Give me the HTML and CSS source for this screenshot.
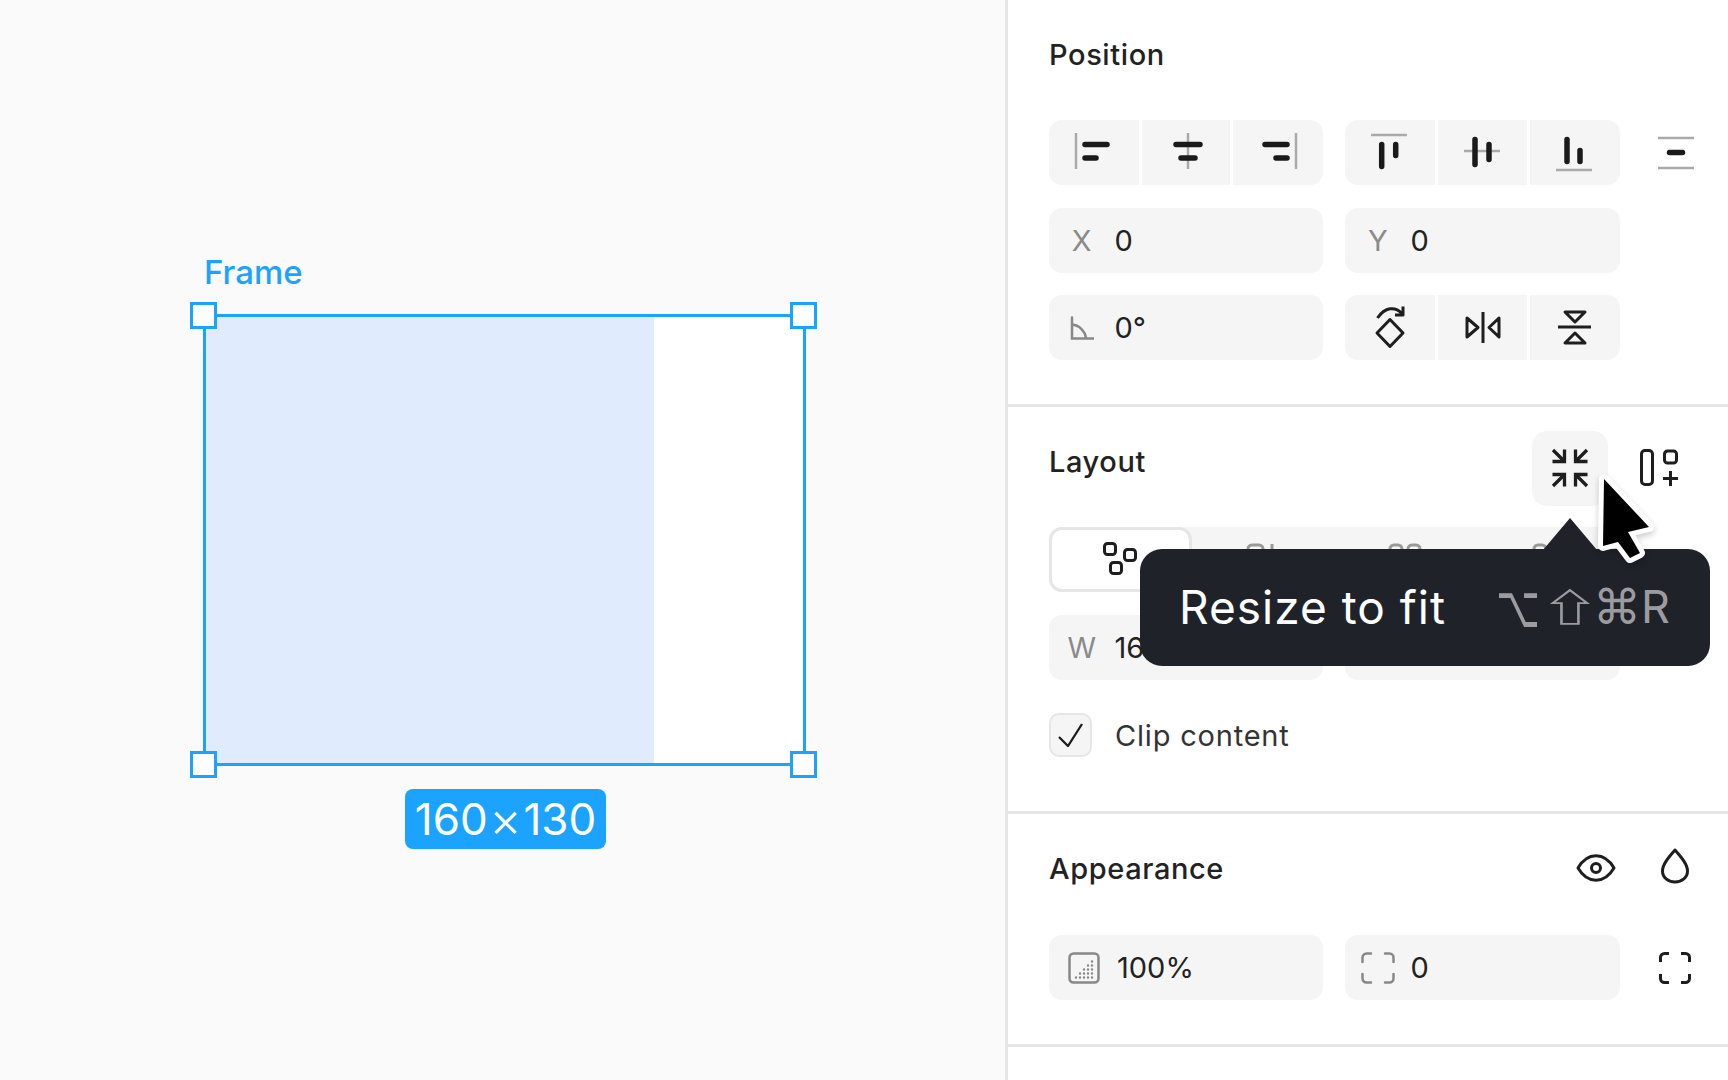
FILE: index.html
```html
<!DOCTYPE html>
<html lang="en">
<head>
<meta charset="utf-8">
<title>Resize to fit</title>
<link rel="stylesheet" href="styles.css">
</head>
<body>
<div class="app">
  <main class="canvas">
    <div class="frame-label">Frame</div>
    <div class="frame"><div class="frame-fill"></div></div>
    <span class="handle h-tl"></span><span class="handle h-tr"></span><span class="handle h-bl"></span><span class="handle h-br"></span>
    <div class="size-badge">160<span class="times">×</span>130</div>
  </main>
  <aside class="panel">
    <section class="section s-position">
      <h2 class="title t-position">Position</h2>
      <div class="grid">
        <div class="seg">
          <div class="cell"><svg class="ico" width="90" height="65" viewBox="0 0 90 65"><path class="g" d="M27 13v36"/><path class="b" d="M36 24.500h22M36 38h11"/></svg></div>
          <div class="cell"><svg class="ico" width="88" height="65" viewBox="0 0 88 65"><path class="g" d="M46 13v36"/><path class="b" d="M34 24.500h24M39 38h14"/></svg></div>
          <div class="cell"><svg class="ico" width="90" height="65" viewBox="0 0 90 65"><path class="g" d="M63 13v36"/><path class="b" d="M32 24.500h22M43 38h11"/></svg></div>
        </div>
        <div class="seg">
          <div class="cell"><svg class="ico" width="90" height="65" viewBox="0 0 90 65"><path class="g" d="M26 15h36"/><path class="b" d="M36.700 24.500v22M50.700 24.500v11"/></svg></div>
          <div class="cell"><svg class="ico" width="89" height="65" viewBox="0 0 89 65"><path class="g" d="M26 31h36"/><path class="b" d="M37 19.500v25M51 24.500v15"/></svg></div>
          <div class="cell"><svg class="ico" width="90" height="65" viewBox="0 0 90 65"><path class="g" d="M26 50h36"/><path class="b" d="M37 19.500v22M50 30.500v11"/></svg></div>
        </div>
        <div class="side"><svg class="ico" width="75" height="65" viewBox="0 0 75 65"><path class="g" d="M38 18h36M38 48h36"/><path class="b" d="M49.500 32.500h13"/></svg></div>

        <div class="field"><span class="lab">X</span><span class="val">0</span></div>
        <div class="field"><span class="lab">Y</span><span class="val">0</span></div>
        <div class="side"></div>

        <div class="field"><span class="lab lab-ico"><svg width="24" height="24" viewBox="0 0 24 24"><path class="gs" d="M2 1.500V22.500H24M2 8.500C9 9 15 15 16 22"/></svg></span><span class="val">0°</span></div>
        <div class="seg">
          <div class="cell"><svg class="ico" width="90" height="65" viewBox="0 0 90 65"><path class="k" d="M45 24.500L58 38 45 51.500 32 38z"/><path class="k" d="M32.500 23C40 12 50 11 57 18.500M58 11.500V20H50"/></svg></div>
          <div class="cell"><svg class="ico" width="89" height="65" viewBox="0 0 89 65"><path class="k" d="M45 17v31"/><path class="k" d="M29 23l11 9.500-11 9.500zM61 23L51 32.500 61 42z"/></svg></div>
          <div class="cell"><svg class="ico" width="90" height="65" viewBox="0 0 90 65"><path class="k" d="M28 32h33"/><path class="k" d="M35 17h20l-10 10zM35 48h20l-10-10z"/></svg></div>
        </div>
        <div class="side"></div>
      </div>
    </section>

    <section class="section s-layout">
      <div class="head">
        <h2 class="title title-up">Layout</h2>
        <div class="head-tools">
          <button class="tool tool-on"><svg width="48" height="48" viewBox="0 0 48 48"><path class="k k35" d="M7 6L18.500 17.500M6.500 17.500H18.500V5.500M41 6L29.500 17.500M41.500 17.500H29.500V5.500M7 42L18.500 30.500M6.500 30.500H18.500V42.500M41 42L29.500 30.500M41.500 30.500H29.500V42.500"/></svg></button>
          <button class="tool tool-plain"><svg width="44" height="44" viewBox="0 0 44 44"><rect class="k" x="4.500" y="4.500" width="11" height="34" rx="3.500"/><rect class="k" x="27.500" y="5" width="12" height="12" rx="3"/><path class="k" d="M33.500 25v15M26 32.500h15"/></svg></button>
        </div>
      </div>
      <div class="tabs">
        <div class="tab tab-on"><svg width="36" height="36" viewBox="0 0 36 36"><rect class="k" x="1.500" y="1.500" width="11" height="11" rx="3"/><rect class="k" x="21.500" y="7.500" width="11" height="11" rx="3"/><rect class="k" x="7.500" y="20.500" width="11" height="11" rx="3"/></svg></div>
        <div class="tab"><svg width="36" height="36" viewBox="0 0 36 36"><rect class="m" x="3" y="3" width="15" height="15" rx="4"/><path class="m" d="M27 2v30"/></svg></div>
        <div class="tab"><svg width="36" height="36" viewBox="0 0 36 36"><rect class="m" x="2" y="3" width="12" height="12" rx="4"/><rect class="m" x="20" y="3" width="12" height="12" rx="4"/></svg></div>
        <div class="tab"><svg width="36" height="36" viewBox="0 0 36 36"><rect class="m" x="3" y="3" width="12" height="12" rx="4"/></svg></div>
      </div>
      <div class="grid grid-two">
        <div class="field"><span class="lab">W</span><span class="val">160</span></div>
        <div class="field"><span class="lab">H</span><span class="val">130</span></div>
      </div>
      <label class="check">
        <span class="box"><svg width="28" height="24" viewBox="0 0 28 24"><path d="M2 14l9 9L25 1"/></svg></span>
        <span class="check-text">Clip content</span>
      </label>
    </section>

    <section class="section s-appearance">
      <div class="head head-app">
        <h2 class="title">Appearance</h2>
        <div class="app-tools">
          <svg width="40" height="28" viewBox="0 0 40 28"><path class="k" d="M2 14C7 5.500 12.500 1.800 20 1.800S33 5.500 38 14C33 22.500 27.500 26.200 20 26.200S7 22.500 2 14z"/><circle class="k" cx="20" cy="14" r="4.500"/></svg>
          <svg class="drop" width="30" height="36" viewBox="0 0 30 36"><path class="k" d="M15 2C8 10 2.500 16.500 2.500 23S8 34 15 34s12.500-4.500 12.500-11S22 10 15 2z"/></svg>
        </div>
      </div>
      <div class="grid">
        <div class="field"><span class="lab lab-ico lab-wide"><svg width="32" height="32" viewBox="0 0 32 32"><rect class="gs" x="1.500" y="1.500" width="29" height="29" rx="4"/><path class="dots" d="M24 9.500h.01M24 13.500h.01M24 17.500h.01M24 21.500h.01M24 25.500h.01M20 13.500h.01M20 17.500h.01M20 21.500h.01M20 25.500h.01M16 17.500h.01M16 21.500h.01M16 25.500h.01M12 21.500h.01M12 25.500h.01M8 25.500h.01"/></svg></span><span class="val">100%</span></div>
        <div class="field"><span class="lab lab-ico"><svg width="34" height="32" viewBox="0 0 34 32"><path class="gs" d="M1.500 10V5.500a4 4 0 0 1 4-4H10M24 1.500h4.500a4 4 0 0 1 4 4V10M32.500 22v4.500a4 4 0 0 1-4 4H24M10 30.500H5.500a4 4 0 0 1-4-4V22"/></svg></span><span class="val">0</span></div>
        <div class="side side-end"><svg width="32" height="32" viewBox="0 0 32 32"><path class="k" d="M1.500 10V5.500a4 4 0 0 1 4-4H10M22 1.500h4.500a4 4 0 0 1 4 4V10M30.500 22v4.500a4 4 0 0 1-4 4H22M10 30.500H5.500a4 4 0 0 1-4-4V22"/></svg></div>
      </div>
    </section>
  </aside>
</div>

<div class="tooltip">
  <span class="tip-arrow"></span>
  <span class="tip-text">Resize to fit</span>
  <span class="tip-keys"><span class="key-opt">⌥</span><span class="key-shift">⇧</span><span class="key-cmd">⌘</span><span class="key-r">R</span></span>
</div>
<svg class="cursor" width="62" height="96" viewBox="0 0 62 96"><path d="M6 6L51 54 30 59 42 80 32 85 20 69 5 73z"/></svg>
</body>
</html>
```
FILE: styles.css
```css
* { box-sizing: border-box; }
html, body { margin: 0; height: 100%; }
body { font-family: Inter, "Noto Sans", sans-serif; color: #222; background: #fff; overflow: hidden; position: relative; }
.app { display: flex; height: 1080px; }

.canvas { position: relative; width: 1005px; flex: none; background: #fafafa; }
.frame-label { position: absolute; left: 204px; top: 252px; font-size: 33px; line-height: 40px; font-weight: 500; color: #1ba3ff; }
.frame { position: absolute; left: 202.500px; top: 314px; width: 603.500px; height: 452px; background: #fff; border: 3px solid #1ba3ff; }
.frame-fill { width: 448.500px; height: 100%; background: #e0ecfe; }
.handle { position: absolute; width: 27px; height: 27px; background: #fff; border: 3px solid #1ba3ff; }
.h-tl { left: 190px; top: 302px; }
.h-tr { left: 790px; top: 302px; }
.h-bl { left: 190px; top: 751px; }
.h-br { left: 790px; top: 751px; }
.size-badge { position: absolute; left: 405px; top: 789px; width: 201px; height: 60px; display: flex; align-items: center; justify-content: center; background: #1ba3ff; color: #fff; border-radius: 8px; font-size: 44px; font-weight: 400; }
.times { margin: 0 1.500px; font-size: 50px; line-height: 1; font-weight: 300; }

.panel { width: 723px; flex: none; border-left: 3px solid #e6e6e6; background: #fff; }
.section { padding-left: 41px; border-bottom: 3px solid #e6e6e6; }
.s-position { height: 407px; padding-top: 36px; }
.s-layout { height: 407px; padding-top: 23px; }
.s-appearance { height: 233px; padding-top: 17px; }

.title { margin: 0; font-size: 29px; line-height: 38px; font-weight: 500; letter-spacing: .6px; color: #222; }
.t-position { margin-bottom: 46px; }
.title-up { padding-bottom: 13px; }

.grid { display: grid; grid-template-columns: 274px 275px 75px; column-gap: 22px; row-gap: 22.500px; }
.grid-two { grid-template-columns: 274px 275px; margin-top: 23px; }
.seg { display: flex; gap: 3px; height: 65px; border-radius: 13px; overflow: hidden; }
.cell { flex: 1 1 auto; background: #f5f5f5; display: flex; }
.ico { display: block; flex: none; }
.side { height: 65px; margin-left: -22px; }
.side-end { margin-left: 17px; display: flex; align-items: center; }

.field { height: 65px; background: #f5f5f5; border-radius: 13px; display: flex; align-items: center; font-size: 29px; }
.lab { width: 65.500px; flex: none; text-align: center; color: #8a8a8a; }
.lab-ico { display: flex; justify-content: center; }
.lab-wide { width: 68px; padding-left: 2px; }
.val { color: #222; }

.g { fill: none; stroke: #aaa; stroke-width: 2.500; }
.b { fill: none; stroke: #1a1a1a; stroke-width: 5.500; stroke-linecap: round; }
.k { fill: none; stroke: #1e1e1e; stroke-width: 3; stroke-linejoin: round; }
.k35 { stroke-width: 3.300; stroke-linejoin: miter; }
.m { fill: none; stroke: #999; stroke-width: 3; }
.gs { fill: none; stroke: #888; stroke-width: 2.500; stroke-linecap: round; }
.dots { fill: none; stroke: #888; stroke-width: 2.400; stroke-linecap: round; }

.head { display: flex; align-items: center; justify-content: space-between; height: 76px; }
.head-tools { display: flex; margin-right: 47px; gap: 29px; align-items: center; }
.tool { width: 76px; height: 75px; border: 0; padding: 0; background: transparent; border-radius: 15px; display: flex; align-items: center; justify-content: center; }
.tool-on { background: #f5f5f5; }
.tool-plain { width: 44px; }
.tabs { display: flex; height: 65px; margin-top: 21px; width: 571px; background: #f5f5f5; border-radius: 13px; }
.tab { flex: 1; display: flex; align-items: center; justify-content: center; }
.tab-on { flex: none; width: 143px; background: #fff; border: 3px solid #e6e6e6; border-radius: 13px; }

.check { display: flex; align-items: center; margin-top: 33px; gap: 23px; }
.box { width: 43px; height: 44px; flex: none; background: #f5f5f5; border: 2px solid #e6e6e6; border-radius: 10px; display: flex; align-items: center; justify-content: center; }
.box path { fill: none; stroke: #1e1e1e; stroke-width: 2.300; }
.check-text { font-size: 29px; letter-spacing: .8px; color: #333; }

.app-tools { display: flex; align-items: center; gap: 44px; margin-right: 38px; margin-bottom: 2px; }
.drop { margin-bottom: 4px; }
.s-appearance .grid { margin-top: 28px; }

.tooltip { position: absolute; left: 1140px; top: 549px; width: 570px; height: 117px; background: #20222a; border-radius: 22px; display: flex; align-items: center; justify-content: space-between; padding: 0 40px 2px 39px; }
.tip-arrow { position: absolute; left: 403px; top: -31px; width: 54px; height: 32px; background: #20222a; clip-path: polygon(50% 0, 100% 100%, 0 100%); }
.tip-text { color: #fff; font-size: 46px; letter-spacing: 1px; }
.tip-keys { display: flex; align-items: center; color: #9c9ca0; line-height: 1; }
.key-opt { font-family: "DejaVu Sans", sans-serif; font-size: 38px; transform: scaleY(1.55); }
.key-shift { font-family: "Noto Sans CJK JP", "DejaVu Sans", sans-serif; font-size: 38px; font-weight: 700; margin: 0 4.500px 4px 10.500px; transform: scaleX(1.55); }
.key-cmd { font-family: "DejaVu Sans", sans-serif; font-size: 48px; }
.key-r { font-size: 45px; }
.cursor { position: absolute; left: 1598px; top: 473px; filter: drop-shadow(0 3px 3px rgba(0,0,0,.2)); }
.cursor path { fill: #000; stroke: #fff; stroke-width: 10; stroke-linejoin: round; paint-order: stroke; }
```
